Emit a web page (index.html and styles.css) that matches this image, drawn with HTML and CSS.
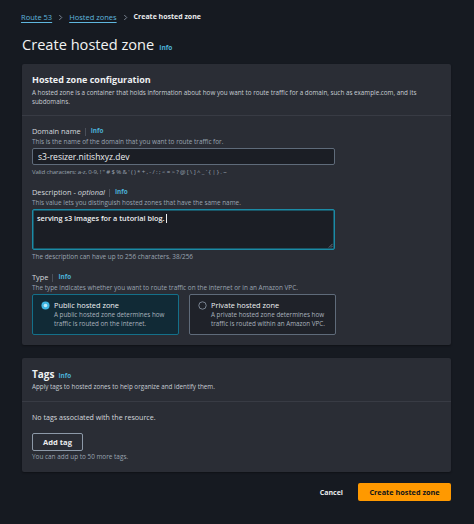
FILE: index.html
```html
<!DOCTYPE html>
<html lang="en">
<head>
<meta charset="utf-8">
<title>Create hosted zone</title>
<link rel="stylesheet" href="styles.css">
</head>
<body>
<div class="page">
  <nav class="crumbs">
    <a class="crumb-link" href="#">Route 53</a>
    <svg class="chev" viewBox="0 0 6 8" width="5" height="7"><path d="M1.5 1 L4.5 4 L1.5 7" fill="none" stroke="#8d99a8" stroke-width="1"/></svg>
    <a class="crumb-link" href="#">Hosted zones</a>
    <svg class="chev" viewBox="0 0 6 8" width="5" height="7"><path d="M1.5 1 L4.5 4 L1.5 7" fill="none" stroke="#8d99a8" stroke-width="1"/></svg>
    <span class="crumb-current">Create hosted zone</span>
  </nav>

  <h1 class="title">Create hosted zone <span class="info">Info</span></h1>

  <section class="panel">
    <header class="panel-head">
      <h2 class="panel-title">Hosted zone configuration</h2>
      <p class="panel-desc">A hosted zone is a container that holds information about how you want to route traffic for a domain, such as example.com, and its subdomains.</p>
    </header>
    <div class="panel-body">
      <div class="field">
        <div class="label">Domain name <span class="sep"></span><span class="info">Info</span></div>
        <div class="help">This is the name of the domain that you want to route traffic for.</div>
        <div class="input">s3-resizer.nitishxyz.dev</div>
        <div class="hint">Valid characters: a-z, 0-9, ! " # $ % &amp; ' ( ) * + , - / : ; &lt; = &gt; ? @ [ \ ] ^ _ ` { | } . ~</div>
      </div>
      <div class="field">
        <div class="label">Description - <i>optional</i> <span class="sep"></span><span class="info">Info</span></div>
        <div class="help">This value lets you distinguish hosted zones that have the same name.</div>
        <div class="textarea">serving s3 images for a tutorial blog.<span class="caret"></span>
          <svg class="grip" viewBox="0 0 6 6" width="5" height="5"><path d="M5.5 1 L1 5.5 M5.5 3.5 L3.5 5.5" stroke="#8d99a8" stroke-width="0.8"/></svg>
        </div>
        <div class="hint">The description can have up to 256 characters. 38/256</div>
      </div>
      <div class="field">
        <div class="label">Type <span class="sep"></span><span class="info">Info</span></div>
        <div class="help">The type indicates whether you want to route traffic on the internet or in an Amazon VPC.</div>
        <div class="cards">
          <div class="card selected">
            <svg class="radio" viewBox="0 0 10 10" width="9" height="9"><circle cx="5" cy="5" r="4.5" fill="#3fb6e2"/><circle cx="5" cy="5" r="2" fill="#bfeafa"/></svg>
            <div class="card-text">
              <div class="card-title">Public hosted zone</div>
              <div class="card-desc">A public hosted zone determines how traffic is routed on the internet.</div>
            </div>
          </div>
          <div class="card">
            <svg class="radio" viewBox="0 0 10 10" width="9" height="9"><circle cx="5" cy="5" r="4.1" fill="none" stroke="#8d99a8" stroke-width="0.9"/></svg>
            <div class="card-text">
              <div class="card-title">Private hosted zone</div>
              <div class="card-desc">A private hosted zone determines how traffic is routed within an Amazon VPC.</div>
            </div>
          </div>
        </div>
      </div>
    </div>
  </section>

  <section class="panel">
    <header class="panel-head tags-head">
      <h2 class="panel-title big">Tags <span class="info">Info</span></h2>
      <p class="panel-desc">Apply tags to hosted zones to help organize and identify them.</p>
    </header>
    <div class="panel-body tags-body">
      <div class="empty">No tags associated with the resource.</div>
      <button class="btn-normal">Add tag</button>
      <div class="hint">You can add up to 50 more tags.</div>
    </div>
  </section>

  <div class="actions">
    <button class="btn-link">Cancel</button>
    <button class="btn-primary">Create hosted zone</button>
  </div>
</div>
</body>
</html>
```

FILE: styles.css
```css
* { box-sizing: border-box; margin: 0; padding: 0; }
html, body { background: #161a21; }
body {
  font-family: "Open Sans", "Noto Sans", sans-serif;
  color: #d1d5db;
  width: 474px;
  height: 524px;
  overflow: hidden;
}
.page {
  padding: 11px 23px 0 22px;
}
.crumbs {
  display: flex;
  align-items: center;
  gap: 6px;
  font-size: 7.5px;
  line-height: 12px;
  height: 12px;
  margin-left: -1px;
}
.crumb-link {
  color: #5fb6de;
  text-decoration: underline;
  text-underline-offset: 1.5px;
}
.crumb-current {
  color: #e9ebed;
  font-weight: 700;
  font-size: 7px;
}
.chev { display: block; }
.title {
  margin-top: 12px;
  height: 18px;
  font-size: 14.6px;
  line-height: 18px;
  font-weight: 400;
  color: #f2f3f3;
  display: flex;
  align-items: baseline;
  gap: 5px;
}
.title .info { font-size: 6.6px; }
.info {
  color: #4bafd6;
  font-weight: 700;
  font-style: normal;
  font-size: 6.4px;
  line-height: 1;
}
.panel {
  margin-top: 11px;
  background: #2a2d35;
  border-radius: 2px;
  box-shadow: 0 1px 2px rgba(0,0,0,0.35);
}
.panel + .panel { margin-top: 13px; }
.panel-head {
  padding: 10px 10px 9px 10px;
  border-bottom: 1px solid #383b44;
}
.panel-title {
  font-size: 9px;
  line-height: 12px;
  height: 12px;
  font-weight: 700;
  color: #eef0f2;
  display: flex;
  align-items: baseline;
  gap: 4px;
}
.panel-title.big { font-size: 10px; line-height: 13px; height: 13px; }
.panel-desc {
  margin-top: 2px;
  font-size: 6.3px;
  line-height: 9px;
  color: #c6ccd3;
}
.panel-body {
  padding: 10px 10px 10px 10px;
  display: flex;
  flex-direction: column;
}
.field + .field { margin-top: 10px; }
.label {
  font-size: 7.4px;
  line-height: 11px;
  height: 11px;
  color: #d5d9de;
  display: flex;
  align-items: center;
}
.label i { font-style: italic; margin-left: 2px; }
.sep {
  width: 1px;
  height: 8px;
  background: #4a4f59;
  margin: 0 5px 0 4px;
}
.help, .hint {
  font-size: 6.4px;
  line-height: 10px;
  height: 10px;
  color: #9aa4b1;
  white-space: nowrap;
}
.input {
  margin-top: 1px;
  width: 303px;
  height: 17px;
  border: 1px solid #5f6b7a;
  background: #1b1e25;
  border-radius: 2px;
  padding: 0 5px;
  font-size: 8.5px;
  line-height: 15px;
  color: #eef0f2;
}
.input + .hint { margin-top: 2px; font-size: 6.1px; letter-spacing: -0.15px; }
.textarea {
  position: relative;
  margin-top: 1px;
  width: 303px;
  height: 41px;
  border: 1px solid #1b8ba6;
  box-shadow: inset 0 0 0 0.5px #1b8ba6;
  background: #1b1e25;
  border-radius: 2px;
  padding: 3px 4px;
  font-size: 7.3px;
  line-height: 11px;
  font-weight: 600;
  color: #eef0f2;
}
.caret {
  display: inline-block;
  width: 1px;
  height: 9px;
  background: #eef0f2;
  vertical-align: -2px;
  margin-left: 1px;
}
.grip { position: absolute; right: 1px; bottom: 1px; }
.textarea + .hint { margin-top: 2px; }
.cards {
  margin-top: 1px;
  display: flex;
  gap: 10px;
}
.card {
  width: 147px;
  height: 41px;
  border: 1px solid #5f6b7a;
  background: #1f2229;
  border-radius: 2px;
  display: flex;
  align-items: flex-start;
  padding: 5px 6px 0 8px;
  gap: 4px;
}
.card.selected {
  border-color: #14708a;
  background: #112a36;
}
.radio {
  flex: none;
  display: block;
  margin-top: 1px;
}
.card-title {
  font-size: 7.4px;
  line-height: 10px;
  color: #eef0f2;
}
.card-desc {
  font-size: 6.3px;
  line-height: 9px;
  color: #a9b2bd;
}
.tags-head { padding: 10px 10px 10px 10px; }
.tags-head .panel-desc { margin-top: 1px; }
.tags-body { padding-bottom: 10px; align-items: flex-start; }
.empty {
  font-size: 7.1px;
  line-height: 10px;
  color: #d5d9de;
}
.btn-normal {
  margin-top: 11px;
  width: 51px;
  height: 18px;
  border: 1px solid #8d99a8;
  border-radius: 2px;
  background: transparent;
  color: #e9ebed;
  font-family: inherit;
  font-weight: 700;
  font-size: 7.6px;
}
.btn-normal + .hint { margin-top: 1px; }
.actions {
  margin-top: 11px;
  display: flex;
  justify-content: flex-end;
  align-items: center;
  gap: 15px;
}
.btn-link {
  background: none;
  border: none;
  color: #e9ebed;
  font-family: inherit;
  font-weight: 700;
  font-size: 7px;
}
.btn-primary {
  width: 93px;
  height: 18px;
  background: #ff9900;
  border: none;
  border-radius: 2px;
  color: #0f141a;
  font-family: inherit;
  font-weight: 700;
  font-size: 7.3px;
}
```
